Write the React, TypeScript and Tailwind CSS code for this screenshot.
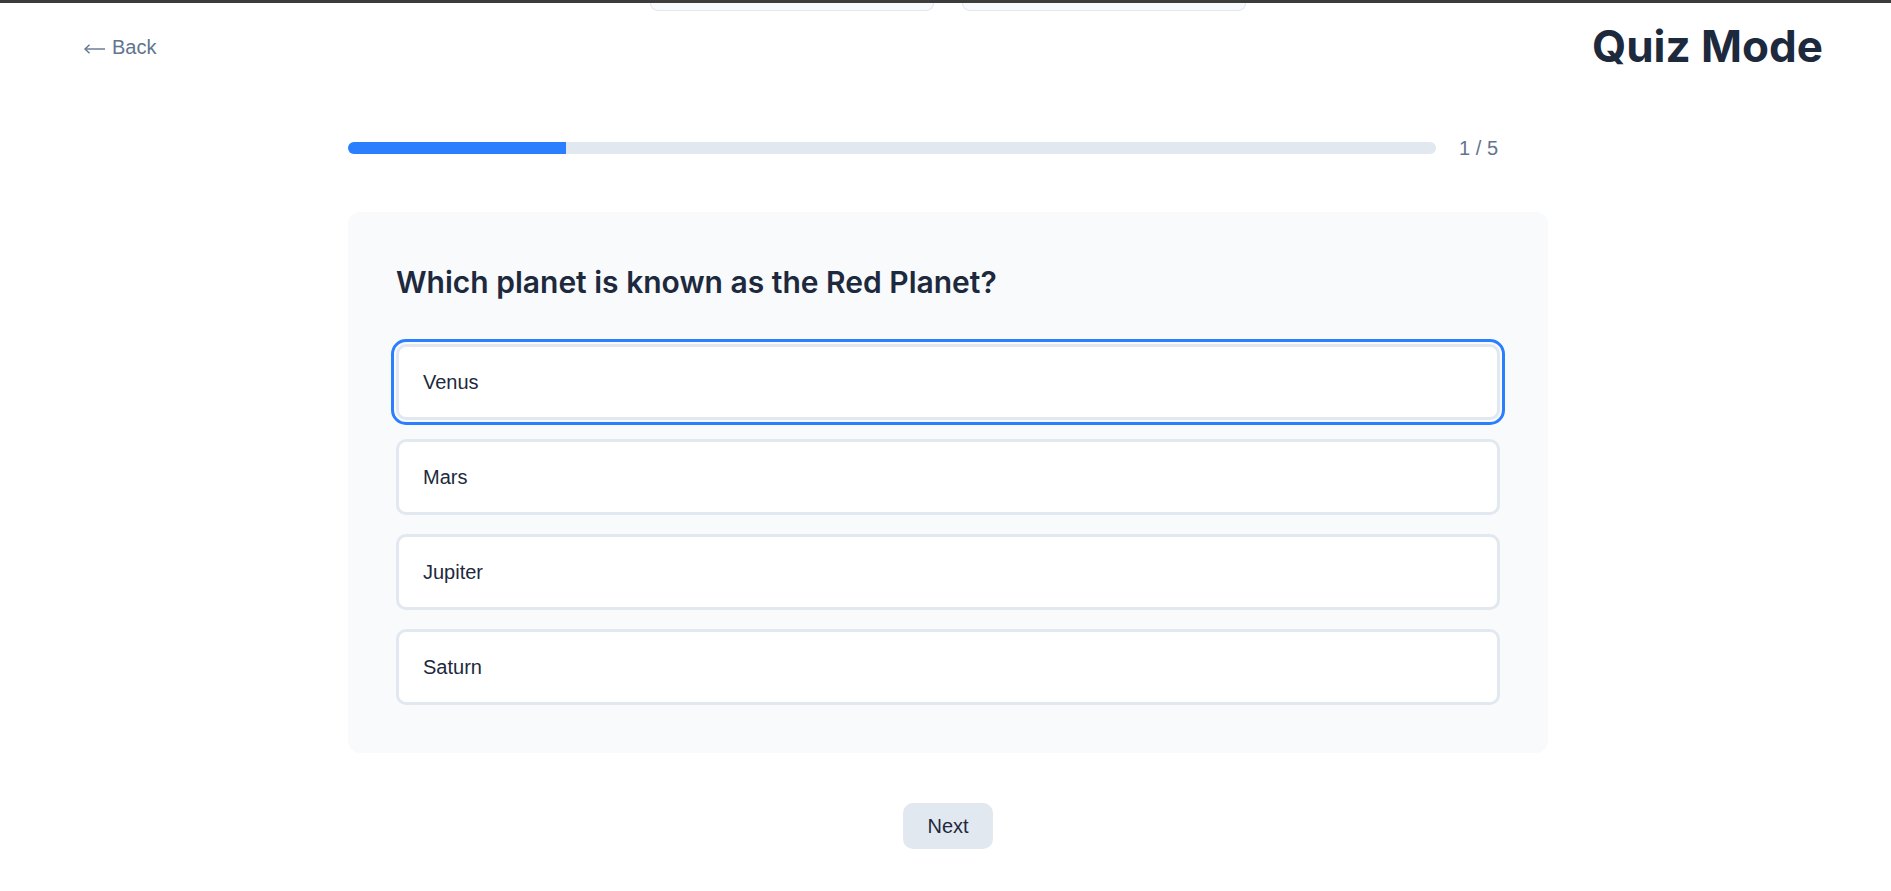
import { useState } from "react";

const options = ["Venus", "Mars", "Jupiter", "Saturn"];

export default function App() {
  const [selected, setSelected] = useState(0);
  const current = 1;
  const total = 5;

  return (
    <div className="min-h-screen bg-white font-['Liberation_Sans',Arial,sans-serif] text-slate-800">
      <div className="h-[3px] bg-[#3c3c3c]" />

      {/* clipped tab strip at the top */}
      <div className="pl-[5px]">
        <div className="flex justify-center gap-[28px]">
          <div className="h-[8px] w-[284px] rounded-b-lg border border-t-0 border-slate-200 bg-slate-50" />
          <div className="h-[8px] w-[284px] rounded-b-lg border border-t-0 border-slate-200 bg-slate-50" />
        </div>
      </div>

      <header className="flex h-[70px] items-center justify-between pl-[84px] pr-[68px]">
        <a href="#" className="mt-[2px] flex items-center gap-[7px] text-xl text-slate-500">
          <svg width="21" height="10" viewBox="0 0 21 10" fill="none" stroke="currentColor" strokeWidth="1.4" className="mt-[3px]">
            <path d="M1 5h20" />
            <path d="M5.5 0.8 1 5l4.5 4.2" />
          </svg>
          <span>Back</span>
        </a>
        <h1 className="font-['Inter',sans-serif] text-[44px] font-bold leading-none text-slate-800">
          Quiz Mode
        </h1>
      </header>

      <div className="pl-[5px]">
        <main className="mx-auto w-[1200px]">
          <div className="mt-[55px] flex h-6 items-center gap-[23px] pr-[50px]">
            <div className="h-3 flex-1 overflow-hidden rounded-full bg-slate-200">
              <div
                className="h-full bg-blue-500"
                style={{ width: `${(current / total) * 100}%` }}
              />
            </div>
            <span className="text-xl text-slate-500">
              {current} / {total}
            </span>
          </div>

          <section className="mt-[52px] rounded-xl bg-slate-50 px-12 pb-12 pt-12">
            <h2 className="mb-[39px] font-['Inter',sans-serif] text-[30px] font-semibold leading-[45px] text-slate-800">
              Which planet is known as the Red Planet?
            </h2>
            <div className="flex flex-col gap-[19px]">
              {options.map((opt, i) => (
                <button
                  key={opt}
                  onClick={() => setSelected(i)}
                  className={
                    "h-[76px] rounded-[10px] border-[3px] border-slate-200 bg-white pl-[24px] text-left text-xl leading-[22px] text-slate-800 " +
                    (selected === i ? "outline-[3px] outline-offset-[2px] outline-blue-500 outline" : "")
                  }
                >
                  {opt}
                </button>
              ))}
            </div>
          </section>

          <div className="mt-[50px] flex justify-center">
            <button className="h-[46px] w-[90px] rounded-[10px] bg-slate-200 text-xl text-slate-800">
              Next
            </button>
          </div>
        </main>
      </div>
    </div>
  );
}
